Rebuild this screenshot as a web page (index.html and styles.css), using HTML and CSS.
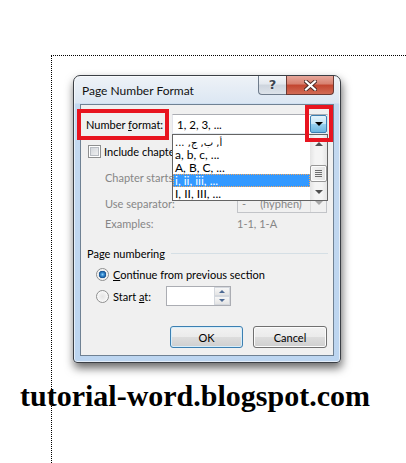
FILE: index.html
```html
<!DOCTYPE html>
<html>
<head>
<meta charset="utf-8">
<link rel="stylesheet" href="styles.css">
</head>
<body>
<div class="page">
  <div class="dialog">
    <div class="titlebar">
      <span class="title">Page Number Format</span>
      <div class="capbtns">
        <div class="cb-help">?</div>
        <div class="cb-close">
          <svg width="13" height="11" viewBox="0 0 13 11">
            <path d="M2 1.5 L11 9.5 M11 1.5 L2 9.5" stroke="#4a2a26" stroke-width="4" stroke-linecap="square" fill="none"/>
            <path d="M2 1.5 L11 9.5 M11 1.5 L2 9.5" stroke="#ffffff" stroke-width="2.2" stroke-linecap="square" fill="none"/>
          </svg>
        </div>
      </div>
    </div>
    <div class="client">
      <div class="row r1">
        <span class="lbl">Number <u>f</u>ormat:</span>
        <div class="combo main"><span class="cval">1, 2, 3, ...</span><span class="cbtn hot"><i class="arrow"></i></span></div>
      </div>
      <div class="row r2">
        <span class="chk"></span><span>Include chapter <u>n</u>umber</span>
      </div>
      <div class="row r3 dis">
        <span class="lbl2">Chapter starts with style:</span>
        <div class="combo dcombo"><span class="cval">Heading 1</span><span class="cbtn"><i class="arrow"></i></span></div>
      </div>
      <div class="row r4 dis">
        <span class="lbl2">Use separator:</span>
        <div class="combo dcombo"><span class="cval">-&nbsp;&nbsp;&nbsp;&nbsp;&nbsp;(hyphen)</span><span class="cbtn"><i class="arrow"></i></span></div>
      </div>
      <div class="row r5 dis">
        <span class="lbl2">Examples:</span><span>1-1, 1-A</span>
      </div>
      <div class="row r6">
        <span>Page numbering</span><span class="gline"></span>
      </div>
      <div class="row r7">
        <span class="radio on"></span><span><u>C</u>ontinue from previous section</span>
      </div>
      <div class="row r8">
        <span class="radio"></span><span class="lbl3">Start <u>a</u>t:</span>
        <div class="spin"><span class="spinbtns"><i class="up"></i><i class="dn"></i></span></div>
      </div>
      <div class="row r9">
        <button class="btn def">OK</button>
        <button class="btn">Cancel</button>
      </div>
    </div>
    <div class="list">
      <div class="items">
        <div class="it"><span class="ar" dir="rtl">أ, ب, ج, ...</span></div>
        <div class="it">a, b, c, ...</div>
        <div class="it">A, B, C, ...</div>
        <div class="it sel">i, ii, iii, ...</div>
        <div class="it">I, II, III, ...</div>
      </div>
      <div class="sb">
        <div class="sb-up"><i></i></div>
        <div class="sb-track"><div class="sb-thumb"><i></i><i></i><i></i><i></i></div></div>
        <div class="sb-dn"><i></i></div>
      </div>
    </div>
    <div class="redbox rb1"></div>
    <div class="redbox rb2"></div>
  </div>
  <div class="caption">tutorial-word.blogspot.com</div>
</div>
</body>
</html>
```

FILE: styles.css
```css
html, body {
  margin: 0;
  background: #fff;
  height: 463px;
  overflow: hidden;
}
body {
  font-family: Lato, "Liberation Sans", sans-serif;
  font-size: 11px;
  color: #000;
}
.page {
  margin: 55px 0 0 51px;
  border-top: 1px dotted #000;
  border-left: 1px dotted #000;
  height: 407px;
}
.dialog {
  position: relative;
  width: 254px;
  margin: 19px 0 0 21px;
  padding: 0 6px 6px;
  border: 1px solid #3b3f45;
  border-radius: 7px 7px 4px 4px;
  background: linear-gradient(#eef2f7 0, #dce7f3 27px, #c4d9f0 28px, #bcd5f0 100%);
  box-shadow: 1px 5px 10px rgba(0,0,0,0.6), inset 0 0 0 1px rgba(255,255,255,0.6);
}
.titlebar {
  display: flex;
  align-items: center;
  height: 28px;
}
.title {
  flex: 1;
  padding-left: 2px;
  color: #111;
  font-size: 12px;
}
.capbtns {
  align-self: flex-start;
  display: flex;
  height: 19px;
}
.cb-help {
  width: 27px;
  height: 18px;
  border: 1px solid #6f7c8c;
  border-top: none;
  border-right: none;
  border-radius: 0 0 0 4px;
  background: linear-gradient(#f4f6f9 0, #e3e8ee 45%, #cdd4dd 50%, #dde3ea 100%);
  color: #3c4450;
  font: bold 13px/18px "DejaVu Sans", sans-serif;
  text-align: center;
  text-shadow: 0 0 2px #fff;
}
.cb-close {
  width: 46px;
  height: 18px;
  border: 1px solid #6b3a34;
  border-top: none;
  border-radius: 0 0 4px 0;
  background: linear-gradient(#e7a79b 0, #d7806f 45%, #c2452f 50%, #d26b55 100%);
  display: flex;
  align-items: center;
  justify-content: center;
}
.client {
  height: 250px;
  border: 1px solid #6f8193;
  background: #f0f0f0;
}
.row {
  display: flex;
  align-items: center;
  height: 20px;
  padding: 0 5px;
  white-space: nowrap;
}
.r1 { margin-top: 9px; }
.r2 { margin-top: 7px; padding-left: 7px; }
.r3 { margin-top: 6px; padding-left: 24px; }
.r4 { margin-top: 6px; padding-left: 24px; }
.r5 { margin-top: 0; padding-left: 24px; }
.r6 { margin-top: 10px; padding-left: 6px; }
.r7 { margin-top: 1px; padding-left: 15px; }
.r8 { margin-top: 2px; padding-left: 15px; }
.r9 { margin-top: 20px; padding-left: 89px; height: 22px; gap: 10px; }
.dis { color: #868686; }
.lbl { flex: 1; }
.lbl2 { width: 132px; overflow: hidden; }
.lbl3 { width: 53px; }
.combo {
  display: flex;
  align-items: center;
  box-sizing: border-box;
  height: 20px;
}
.combo.main {
  width: 156px;
  border: 1px solid;
  border-color: #abadb3 #dbdfe6 #e3e9ef #e2e3ea;
  background: #fff;
  font-size: 11.5px;
}
.combo.dcombo {
  width: 90px;
  border: 1px solid #c2c4c8;
  background: #f0f0f0;
}
.cval {
  flex: 1;
  padding-left: 4px;
}
.cbtn {
  width: 16px;
  height: 18px;
  box-sizing: border-box;
  display: flex;
  align-items: center;
  justify-content: center;
  border-left: 1px solid #dcdcdc;
}
.cbtn.hot {
  width: 17px;
  border: 1px solid #3c7fb1;
  border-radius: 2px;
  background: linear-gradient(#e5f4fc 0, #c4e5f6 50%, #98d1ef 50%, #6cb6e0 100%);
}
.arrow {
  width: 0;
  height: 0;
  border-left: 4px solid transparent;
  border-right: 4px solid transparent;
  border-top: 4px solid #000;
}
.dcombo .arrow { border-top-color: #a8a8a8; }
.chk {
  width: 13px;
  height: 13px;
  box-sizing: border-box;
  margin-right: 3px;
  border: 1px solid #8e8f8f;
  background: linear-gradient(135deg, #cbcfd5, #f7f7f7);
  box-shadow: inset 0 0 0 1px #fff, inset 0 0 0 2px #b8bcc2;
}
.gline {
  flex: 1;
  height: 1px;
  margin-left: 6px;
  background: #d5dfe5;
}
.radio {
  width: 13px;
  height: 13px;
  box-sizing: border-box;
  margin-right: 4px;
  border: 1px solid #8e8f8f;
  border-radius: 50%;
  background: radial-gradient(circle at 50% 50%, #e4e4e4 0, #f2f2f2 4px, #fff 6px);
}
.radio.on {
  background: radial-gradient(circle at 50% 50%, #8fd0f6 0, #3b8fd4 1.5px, #14508f 3.5px, #e8e8e8 4px, #fff 6px);
}
.spin {
  width: 65px;
  height: 20px;
  box-sizing: border-box;
  border: 1px solid #abadb3;
  background: #fff;
  display: flex;
  justify-content: flex-end;
}
.spinbtns {
  width: 16px;
  display: flex;
  flex-direction: column;
}
.spinbtns i {
  flex: 1;
  display: flex;
  align-items: center;
  justify-content: center;
  border: 1px solid #d4d8de;
  background: linear-gradient(#f7f7f7, #e4e4e4);
}
.spinbtns i::after {
  content: "";
  width: 0;
  height: 0;
  border-left: 3px solid transparent;
  border-right: 3px solid transparent;
}
.spinbtns .up::after { border-bottom: 3px solid #4d6a94; }
.spinbtns .dn::after { border-top: 3px solid #4d6a94; }
.btn {
  width: 73px;
  height: 22px;
  padding: 0;
  border: 1px solid #707070;
  border-radius: 3px;
  background: linear-gradient(#f2f2f2 0, #ebebeb 50%, #dddddd 50%, #cfcfcf 100%);
  box-shadow: inset 0 0 0 1px #fcfcfc;
  font: inherit;
  color: #000;
}
.btn + .btn { width: 74px; }
.btn.def {
  border-color: #3c7fb1;
  box-shadow: inset 0 0 0 1px #d6eefb;
}
.list {
  position: absolute;
  left: 98px;
  top: 58px;
  width: 154px;
  height: 65px;
  border: 1px solid #646464;
  background: #fff;
  display: flex;
  font-size: 12px;
}
.items {
  flex: 1;
}
.it {
  height: 13px;
  line-height: 13px;
  padding-left: 2px;
  white-space: nowrap;
  box-sizing: border-box;
}
.it.sel {
  background: #3399ff;
  color: #fff;
  border: 1px dotted #f5a55a;
  padding-left: 1px;
  line-height: 11px;
}
.ar {
  font-family: "DejaVu Sans", sans-serif;
  font-size: 10px;
}
.sb {
  width: 17px;
  display: flex;
  flex-direction: column;
  background: linear-gradient(to right, #e4e4e4, #f4f4f4 30%, #f4f4f4 70%, #e4e4e4);
}
.sb-up, .sb-dn {
  height: 17px;
  display: flex;
  align-items: center;
  justify-content: center;
}
.sb-up i, .sb-dn i {
  width: 0;
  height: 0;
  border-left: 4px solid transparent;
  border-right: 4px solid transparent;
}
.sb-up i { border-bottom: 4px solid #505050; }
.sb-dn i { border-top: 4px solid #505050; }
.sb-track {
  flex: 1;
}
.sb-thumb {
  height: 17px;
  margin: 13px 0 0 0;
  box-sizing: border-box;
  border: 1px solid #979797;
  border-radius: 2px;
  background: linear-gradient(to right, #f3f3f3, #e4e4e4);
  box-shadow: inset 0 0 0 1px #fcfcfc;
  display: flex;
  flex-direction: column;
  align-items: center;
  justify-content: center;
  gap: 1px;
}
.sb-thumb i {
  width: 7px;
  height: 1px;
  background: #6e6e6e;
}
.redbox {
  position: absolute;
  box-sizing: border-box;
  border: 4px solid #e8141f;
}
.rb1 { left: 3px; top: 33px; width: 92px; height: 31px; }
.rb2 { left: 231px; top: 29px; width: 28px; height: 37px; }
.caption {
  position: relative;
  margin: 16px 0 0 -32px;
  font: bold 30px/34px "Liberation Serif", serif;
  color: #000;
  white-space: nowrap;
}
```
